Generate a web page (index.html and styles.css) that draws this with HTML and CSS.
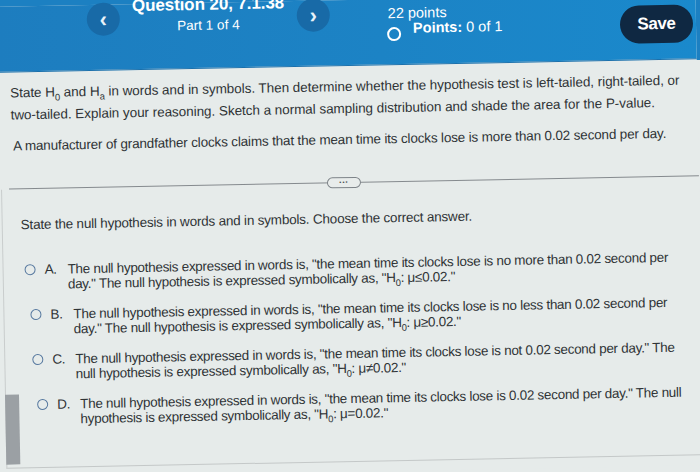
FILE: index.html
```html
<!DOCTYPE html>
<html>
<head>
<meta charset="utf-8">
<link rel="stylesheet" href="styles.css">
</head>
<body>
<div class="page">
  <header class="topbar">
    <button class="circle prev">&#8249;</button>
    <div class="qtitle">
      <div class="qname">Question 20, 7.1.38</div>
      <div class="qpart">Part 1 of 4</div>
    </div>
    <button class="circle next">&#8250;</button>
    <div class="points">
      <div class="pts">22 points</div>
      <div class="score"><span class="ring"></span><span><b>Points:</b> 0 of 1</span></div>
    </div>
    <button class="save">Save</button>
  </header>
  <main class="content">
    <p class="intro">State H<sub>0</sub> and H<sub>a</sub> in words and in symbols. Then determine whether the hypothesis test is left-tailed, right-tailed, or two-tailed. Explain your reasoning. Sketch a normal sampling distribution and shade the area for the P-value.</p>
    <p class="claim">A manufacturer of grandfather clocks claims that the mean time its clocks lose is more than 0.02 second per day.</p>
    <div class="divider"><span class="more">&bull;&bull;&bull;</span></div>
    <section class="panel">
      <p class="prompt">State the null hypothesis in words and in symbols. Choose the correct answer.</p>
      <div class="options">
        <div class="opt a"><span class="radio"></span><span class="letter">A.</span><span class="otext">The null hypothesis expressed in words is, "the mean time its clocks lose is no more than 0.02 second per day." The null hypothesis is expressed symbolically as, "H<sub>0</sub>: &mu;&le;0.02."</span></div>
        <div class="opt b"><span class="radio"></span><span class="letter">B.</span><span class="otext">The null hypothesis expressed in words is, "the mean time its clocks lose is no less than 0.02 second per day." The null hypothesis is expressed symbolically as, "H<sub>0</sub>: &mu;&ge;0.02."</span></div>
        <div class="opt c"><span class="radio"></span><span class="letter">C.</span><span class="otext">The null hypothesis expressed in words is, "the mean time its clocks lose is not 0.02 second per day." The null hypothesis is expressed symbolically as, "H<sub>0</sub>: &mu;&ne;0.02."</span></div>
        <div class="opt d"><span class="radio"></span><span class="letter">D.</span><span class="otext">The null hypothesis expressed in words is, "the mean time its clocks lose is 0.02 second per day." The null hypothesis is expressed symbolically as, "H<sub>0</sub>: &mu;=0.02."</span></div>
      </div>
      <div class="scroll"></div>
    </section>
  </main>
</div>
</body>
</html>
```
FILE: styles.css
```css
* { box-sizing: border-box; }
html {
  margin: 0; padding: 0;
  background: linear-gradient(to bottom, #1c80c2 0, #1c80c2 60px, #e6ebea 60px);
}
body {
  margin: 0; padding: 0;
  width: 700px; height: 472px; overflow: hidden;
  font-family: "Liberation Sans", Arial, sans-serif;
  color: #2f3336;
}
.page {
  width: 700px; height: 472px;
  display: flex; flex-direction: column;
  background: #e6ebea;
  transform: rotate(-1.1deg);
  transform-origin: 350px 236px;
}
.topbar {
  height: 66px; flex: none;
  background: linear-gradient(90deg, #1d7dbf 0%, #1c83c5 55%, #1a89cc 100%);
  display: flex; align-items: flex-start; color: #fff;
  padding: 0 3px 0 91px;
  border-bottom: 1px solid #1a70ac;
}
.circle {
  width: 33px; height: 33px; border-radius: 50%; flex: none;
  border: none; background: #186aa7; color: #e8f2fa;
  font-size: 22px; font-weight: bold; line-height: 30px; padding: 0;
  font-family: "Liberation Sans", sans-serif;
  margin-top: -2px;
}
.qtitle { width: 177px; text-align: center; margin-top: -8px; }
.qname { font-size: 17px; font-weight: bold; line-height: 20px; letter-spacing: -0.1px; }
.qpart { font-size: 13.5px; line-height: 18px; margin-top: 2px; }
.points { margin-left: 58px; margin-top: 5px; font-size: 14.5px; }
.pts { line-height: 18px; }
.score { display: flex; align-items: flex-start; line-height: 18px; margin-top: -3px; }
.score b { font-weight: bold; }
.ring {
  width: 14px; height: 14px; border: 2.5px solid #fff; border-radius: 50%;
  margin: 8px 12px 0 -1px; flex: none;
}
.save {
  margin-left: auto; margin-top: 11px;
  width: 73px; height: 38px; border-radius: 19px; border: none;
  background: #0f2842; color: #fff; font-weight: bold; font-size: 17px;
  letter-spacing: -0.4px; padding: 0;
  font-family: "Liberation Sans", sans-serif;
}
.content { flex: 1; padding: 0 0 0 13px; font-size: 13.5px; display: flex; flex-direction: column; }
p { margin: 0; }
sub { font-size: 70%; line-height: 0; vertical-align: -0.4em; }
.intro { margin-top: 10px; line-height: 21.5px; width: 684px; letter-spacing: -0.05px; }
.claim { margin-top: 11px; margin-left: 2px; line-height: 20px; letter-spacing: -0.17px; }
.divider {
  margin-top: 32px; height: 1px; background: #858a8e; position: relative; margin-left: -3px;
}
.more {
  position: absolute; left: 318px; top: -5px; width: 34px; height: 11px;
  border: 1.5px solid #7e8489; border-radius: 6px; background: #e8eceb;
  font-size: 6px; line-height: 8px; text-align: center; color: #4a4f54; letter-spacing: 1px;
}
.panel {
  flex: 1; margin-left: -11px; padding-left: 10px;
  border-left: 1px solid #c9cdcd; border-bottom: 1px solid #c4c8c8;
  margin-bottom: 10px; position: relative;
}
.prompt { margin-top: 27px; margin-left: 8px; line-height: 18px; letter-spacing: -0.2px; }
.options {
  margin-top: 28px; margin-left: 11px; margin-right: 20px;
  display: flex; flex-direction: column; gap: 15px;
}
.opt { display: flex; align-items: flex-start; line-height: 15px; font-size: 13.5px; letter-spacing: -0.3px; }
.radio {
  width: 11px; height: 11px; border: 1.5px solid #56789f; border-radius: 50%;
  margin-top: 2px; flex: none;
}
.letter { width: 23px; margin-left: 9px; flex: none; }
.otext { flex: 1; }
.b { margin-left: 5px; }
.c { margin-left: 6px; }
.d { margin-left: 10px; }
.scroll {
  position: absolute; left: -1px; top: 205px; width: 14px; height: 70px;
  background: #9ba0a4;
}
```
